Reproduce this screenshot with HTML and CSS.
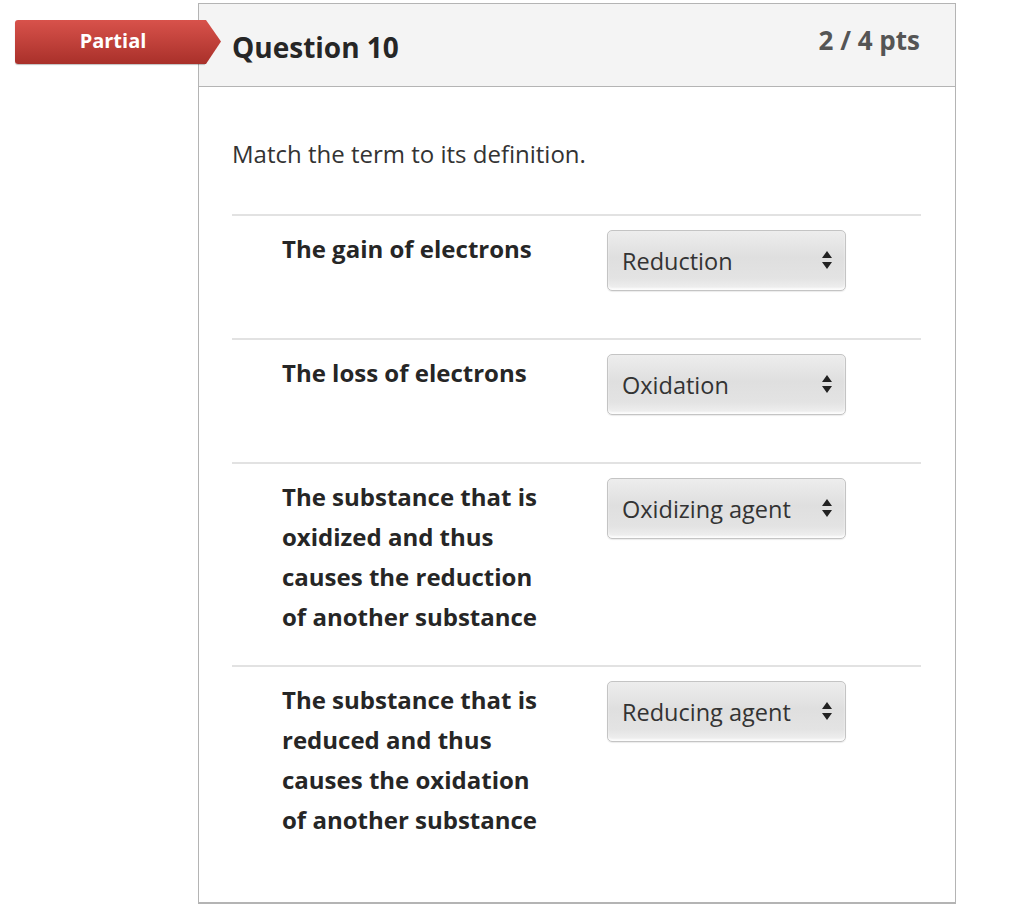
FILE: index.html
```html
<!DOCTYPE html>
<html lang="en">
<head>
    <meta charset="UTF-8">
    <meta name="viewport" content="width=device-width, initial-scale=1.0">
    <title>Question 10</title>
    <link rel="stylesheet" href="styles.css">
</head>
<body>
    <div class="question">
        <div class="badge">
            <span>Partial</span>
            <svg class="badge-tip" width="18" height="44" viewBox="0 0 18 44">
                <path d="M0 0 L2 0 L17 21.5 L2 44 L0 44 Z" fill="url(#tipfill)"/>
                <defs>
                    <linearGradient id="tipfill" x1="0" y1="0" x2="0" y2="1">
                        <stop offset="0" stop-color="#d8524b"/>
                        <stop offset="1" stop-color="#a9302a"/>
                    </linearGradient>
                </defs>
            </svg>
        </div>

        <div class="question-header">
            <h2>Question 10</h2>
            <span class="points">2 / 4 pts</span>
        </div>

        <div class="question-body">
            <p class="prompt">Match the term to its definition.</p>

            <div class="match-row">
                <div class="term">The gain of electrons</div>
                <div class="select-wrap">
                    <select>
                        <option>Reduction</option>
                    </select>
                    <svg class="arrows" width="10" height="18" viewBox="0 0 10 18"><path d="M5 0 L10 7 L0 7 Z M0 11 L10 11 L5 18 Z" fill="#222"/></svg>
                </div>
            </div>

            <div class="match-row">
                <div class="term">The loss of electrons</div>
                <div class="select-wrap">
                    <select>
                        <option>Oxidation</option>
                    </select>
                    <svg class="arrows" width="10" height="18" viewBox="0 0 10 18"><path d="M5 0 L10 7 L0 7 Z M0 11 L10 11 L5 18 Z" fill="#222"/></svg>
                </div>
            </div>

            <div class="match-row">
                <div class="term">The substance that is oxidized and thus causes the reduction of another substance</div>
                <div class="select-wrap">
                    <select>
                        <option>Oxidizing agent</option>
                    </select>
                    <svg class="arrows" width="10" height="18" viewBox="0 0 10 18"><path d="M5 0 L10 7 L0 7 Z M0 11 L10 11 L5 18 Z" fill="#222"/></svg>
                </div>
            </div>

            <div class="match-row">
                <div class="term">The substance that is reduced and thus causes the oxidation of another substance</div>
                <div class="select-wrap">
                    <select>
                        <option>Reducing agent</option>
                    </select>
                    <svg class="arrows" width="10" height="18" viewBox="0 0 10 18"><path d="M5 0 L10 7 L0 7 Z M0 11 L10 11 L5 18 Z" fill="#222"/></svg>
                </div>
            </div>
        </div>
    </div>
</body>
</html>
```

FILE: styles.css
```css
body {
    margin: 0;
    background-color: white;
    font-family: "Open Sans", Lato, Arial, sans-serif;
    color: #2d2d2d;
}

.question {
    position: relative;
    width: 756px;
    margin: 3px 0 0 198px;
    border: 1px solid #b4b4b4;
    border-bottom: 2px solid #b4b4b4;
}

/* red result ribbon hanging off the left edge */
.badge {
    position: absolute;
    top: 16px;
    left: -184px;
    width: 190px;
    height: 44px;
    border-radius: 3px 0 0 3px;
    background: linear-gradient(#d8524b, #a9302a);
    box-shadow: 0 1px 1px rgba(0, 0, 0, 0.25);
    color: white;
    font-weight: bold;
    font-size: 20px;
    line-height: 42px;
    text-align: center;
}

.badge span {
    display: inline-block;
    margin-left: 6px;
}

.badge-tip {
    position: absolute;
    top: 0;
    right: -17px;
}

.question-header {
    display: flex;
    justify-content: space-between;
    align-items: flex-start;
    height: 82px;
    padding: 0 35px 0 33px;
    background-color: #f4f4f4;
    border-bottom: 1px solid #b4b4b4;
}

.question-header h2 {
    margin: 26px 0 0;
    font-size: 28px;
    line-height: 34px;
    font-weight: bold;
    color: #262626;
}

.points {
    margin-top: 19px;
    font-size: 26px;
    line-height: 34px;
    font-weight: bold;
    color: #555;
}

.question-body {
    padding: 47px 34px 34px 33px;
}

.prompt {
    margin: 0 0 40px;
    font-size: 24px;
    line-height: 40px;
    color: #333;
}

.match-row {
    display: flex;
    align-items: flex-start;
    padding: 13px 0 26px 50px;
    border-top: 2px solid #e2e2e2;
}

.term {
    width: 275px;
    margin-right: 50px;
    padding-bottom: 2px;
    font-size: 24px;
    line-height: 40px;
    font-weight: bold;
    color: #262626;
}

.select-wrap {
    position: relative;
    margin: 1px 0 21px;
}

.select-wrap select {
    appearance: none;
    -webkit-appearance: none;
    width: 239px;
    height: 61px;
    padding: 0 40px 0 14px;
    border: 1px solid #c4c4c4;
    border-radius: 5px;
    background: linear-gradient(#ededed, #dfdfdf 45%, #e3e3e3 80%, #f1f1f1);
    box-shadow: inset 0 -2px 2px rgba(255, 255, 255, 0.8), 0 1px 1px rgba(0, 0, 0, 0.08);
    font-family: inherit;
    font-size: 23.5px;
    color: #333;
}

.arrows {
    position: absolute;
    top: 21px;
    right: 14px;
    pointer-events: none;
}
```
